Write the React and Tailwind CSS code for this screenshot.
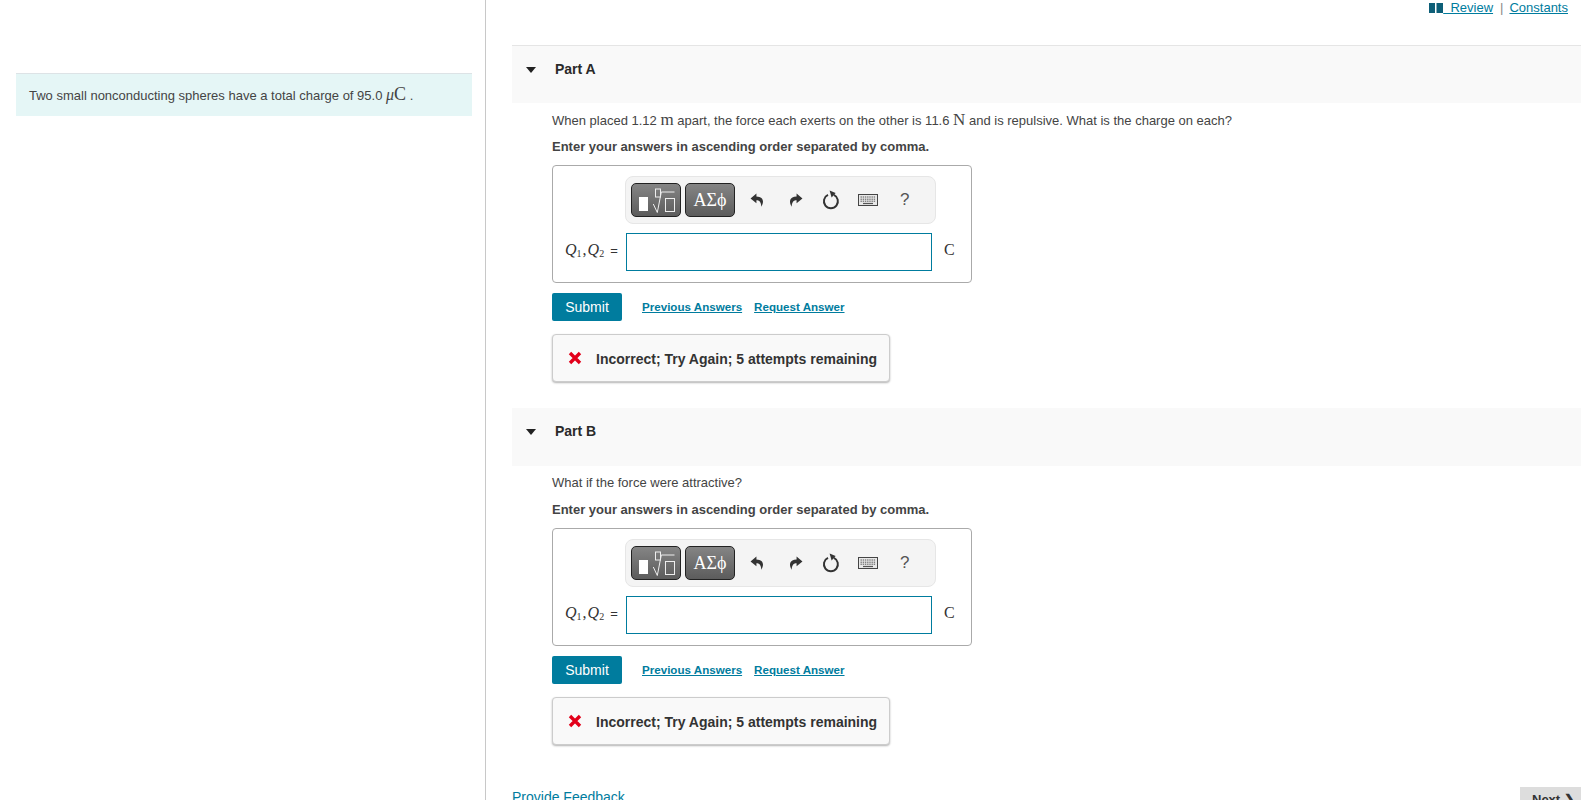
import React from "react";

const sans = "font-['Liberation_Sans',Arial,sans-serif]";
const serif = "font-['Liberation_Serif','Times_New_Roman',serif]";

function Reply({ flip }) {
  return (
    <svg width="15" height="16" viewBox="0 0 14 14" className={flip ? "-scale-x-100" : ""}>
      <path d="M6 1 L0.5 5.6 L6 10 V7.2 C8.6 7.2 10.2 8.4 10.6 13.2 C13.4 8.6 12.6 3.9 6 3.7 Z" fill="#333" />
    </svg>
  );
}

function Refresh() {
  return (
    <svg width="18" height="20" viewBox="0 0 18 20" fill="none">
      <path d="M6 4.9 A7 7 0 1 0 11.8 4.9" stroke="#333" strokeWidth="2" />
      <path d="M7.6 0.6 L13.6 3 L9.6 7.4 Z" fill="#333" />
    </svg>
  );
}

function Keyboard() {
  return (
    <svg width="20" height="12" viewBox="0 0 20 12">
      <rect x="0.5" y="0.5" width="19" height="11" fill="#e8e8e8" stroke="#444" />
      <path d="M2.5 3 H17.5 M2.5 5.2 H17.5 M2.5 7.2 H17.5" stroke="#555" strokeWidth="1" strokeDasharray="1.4 0.8" />
      <path d="M5 9.5 H15" stroke="#555" strokeWidth="1.2" />
    </svg>
  );
}

function TemplateIcon() {
  return (
    <svg width="38" height="27" viewBox="0 0 38 27" fill="none">
      <rect x="2" y="10" width="9" height="14" fill="#fff" />
      <rect x="18.5" y="2" width="5" height="8" stroke="#eee" strokeWidth="1" />
      <path d="M16.3 17 L20.3 25.5 L24.3 5 H37.5" stroke="#eee" strokeWidth="1" />
      <rect x="28.5" y="11.5" width="9" height="13" stroke="#eee" strokeWidth="1" />
    </svg>
  );
}

function Part({ name, question, topBorder }) {
  return (
    <section>
      <div className={`h-[58px] bg-[#f9f9f9] flex items-start ${topBorder ? "border-t border-[#e5e5e5]" : ""}`}>
        <div className="ml-[14px] mt-[21px] w-0 h-0 border-l-[5px] border-r-[5px] border-t-[6px] border-l-transparent border-r-transparent border-t-[#222]" />
        <div className="ml-[19px] mt-[13px] text-[14px] leading-5 font-bold text-[#2a2a2a]">{name}</div>
      </div>
      <div className="pl-10">
        <p className="mt-[7px] text-[13px] leading-5 text-[#444] h-5">{question}</p>
        <p className="mt-[7px] text-[13px] leading-5 font-bold text-[#444]">Enter your answers in ascending order separated by comma.</p>
        <div className="mt-[8px] w-[420px] h-[118px] border border-[#aaa] rounded-[4px] bg-white flex flex-col">
          <div className="ml-[72px] mt-[10px] w-[311px] h-[48px] border border-[#e6e6e6] rounded-[8px] bg-[#f4f4f4] flex items-center pl-[5px]">
            <div className="w-[50px] h-[34px] rounded-[5px] border border-[#222] bg-gradient-to-b from-[#858585] to-[#5c5c5c] flex items-center justify-center">
              <TemplateIcon />
            </div>
            <div className={`ml-1 w-[50px] h-[34px] rounded-[5px] border border-[#222] bg-gradient-to-b from-[#858585] to-[#5c5c5c] flex items-center justify-center text-white text-[18px] ${serif}`}>
              ΑΣϕ
            </div>
            <div className="ml-[15px] w-[15px] flex justify-center"><Reply /></div>
            <div className="ml-[23px] w-[15px] flex justify-center"><Reply flip /></div>
            <div className="ml-[19px] w-[18px] flex justify-center"><Refresh /></div>
            <div className="ml-[18px] w-5 flex justify-center"><Keyboard /></div>
            <div className="ml-[22px] text-[17px] text-[#555]">?</div>
          </div>
          <div className="mt-[9px] flex items-center">
            <div className={`ml-[12px] w-[61px] text-[16px] leading-[30px] pb-1 text-[#333] whitespace-nowrap ${serif}`}>
              <i>Q</i><sub className="text-[10px]">1</sub><span className="mx-[1px]">,</span><i>Q</i><sub className="text-[10px]">2</sub><span className={`ml-[6px] text-[13px] ${sans}`}>=</span>
            </div>
            <div className="w-[306px] h-[38px] border border-[#007c9e] bg-white" />
            <div className={`ml-[12px] text-[16px] leading-[30px] pb-1 text-[#333] ${serif}`}>C</div>
          </div>
        </div>
        <div className="mt-[10px] flex items-center">
          <button className="w-[70px] h-[28px] rounded-[2px] bg-[#007c9e] text-white text-[14px] leading-none">Submit</button>
          <a className="ml-5 text-[11.6px] font-bold text-[#007c9e] underline">Previous Answers</a>
          <a className="ml-3 text-[11.6px] font-bold text-[#007c9e] underline">Request Answer</a>
        </div>
        <div className="mt-[13px] w-[338px] h-[48px] border border-[#ccc] rounded-[4px] bg-[#f9f9f9] shadow-[0_1px_2px_rgba(0,0,0,0.3)] flex items-center pl-[15px]">
          <svg width="14" height="14" viewBox="0 0 14 14"><path d="M2 2 L12 12 M12 2 L2 12" stroke="#e2001a" strokeWidth="3.4" /></svg>
          <span className="ml-[14px] text-[14px] leading-5 pt-[2px] font-bold text-[#333] whitespace-nowrap">Incorrect; Try Again; 5 attempts remaining</span>
        </div>
      </div>
    </section>
  );
}

export default function App() {
  return (
    <div className={`h-[800px] overflow-hidden flex bg-white ${sans}`}>
      <aside className="w-[486px] shrink-0 border-r border-[#c8c8c8] pl-4 pr-[13px] pt-[73px]">
        <div className="h-[43px] border-t border-[#dde3e6] bg-[#e5f6f6] pl-[13px] pb-[2px] flex items-center text-[13px] text-[#444]">
          <span>Two small nonconducting spheres have a total charge of 95.0 <span className={`italic text-[16px] ${serif}`}>μ</span><span className={`text-[18px] ${serif}`}>C</span> .</span>
        </div>
      </aside>
      <main className="flex-1 min-w-0 pl-[26px]">
        <header className="h-[45px] flex justify-end pr-[13px] pt-[1px] text-[13px] leading-[14px]">
          <div className="flex items-start">
            <svg width="14" height="10" viewBox="0 0 14 10" className="mt-[2px]">
              <path d="M0 0 H6 V10 H0 Z M7.5 0 H14 V10 H7.5 Z" fill="#0d5f78" />
            </svg>
            <a className="text-[#007c9e] underline whitespace-pre">  Review</a>
            <span className="ml-[7px] mr-[6px] text-[#888]">|</span>
            <a className="text-[#007c9e] underline">Constants</a>
          </div>
        </header>
        <Part topBorder name="Part A" question={<>When placed 1.12 <span className={`text-[17px] ${serif}`}>m</span> apart, the force each exerts on the other is 11.6 <span className={`text-[17px] ${serif}`}>N</span> and is repulsive. What is the charge on each?</>} />
        <div className="h-[26px]" />
        <Part name="Part B" question="What if the force were attractive?" />
        <div className="mt-[42px] flex justify-between items-start">
          <a className="text-[14px] leading-5 text-[#007c9e]">Provide Feedback</a>
          <div className="w-[61px] h-[30px] bg-[#ddd] text-[13px] font-bold text-[#333] pl-3 pt-[3px] whitespace-nowrap">Next ❯</div>
        </div>
      </main>
    </div>
  );
}
